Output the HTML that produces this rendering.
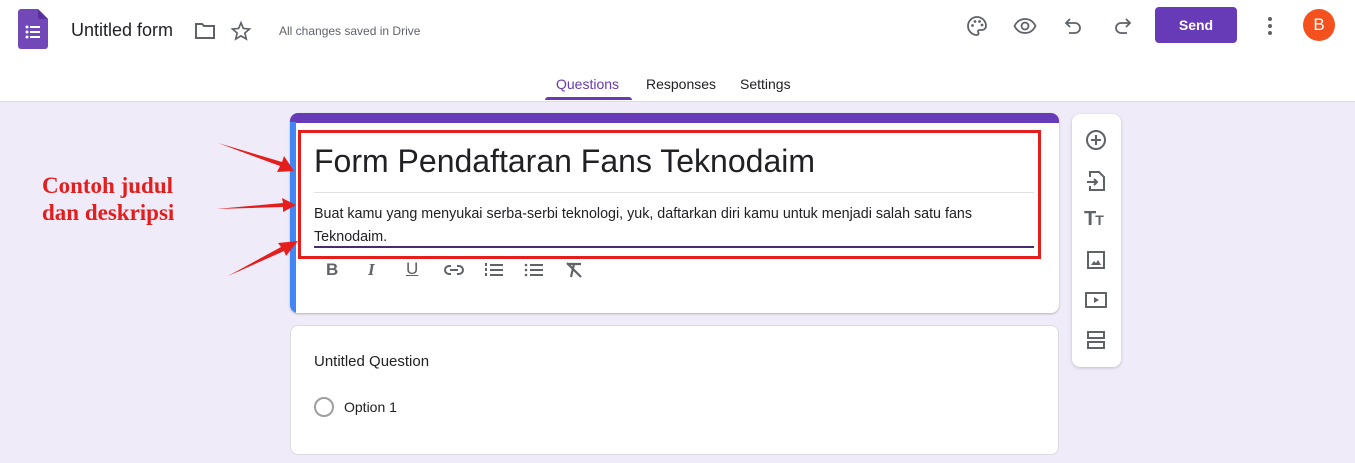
<!DOCTYPE html>
<html><head><meta charset="utf-8"><style>
*{margin:0;padding:0;box-sizing:border-box}
body{width:1355px;height:463px;overflow:hidden;background:#f0ebf8;font-family:"Liberation Sans",Arial,sans-serif;position:relative;color:#202124}
.hdr{position:absolute;left:0;top:0;width:1355px;height:102px;background:#fff;border-bottom:1px solid #dadce0}
.abs{position:absolute}
.tab{position:absolute;top:76px;font-size:14px;color:#202124}
.card{position:absolute;background:#fff;border-radius:8px;border:1px solid #dadce0}
</style></head><body>
<div class="hdr">
  <svg class="abs" style="left:18px;top:9px" width="30" height="40" viewBox="0 0 30 40"><path d="M3 0H20L30 10V37A3 3 0 0 1 27 40H3A3 3 0 0 1 0 37V3A3 3 0 0 1 3 0Z" fill="#7248b9"/><path d="M20 0L30 10H22A2 2 0 0 1 20 8Z" fill="#5a2fa0"/><g fill="#fff"><circle cx="9" cy="18" r="1.5"/><circle cx="9" cy="23" r="1.5"/><circle cx="9" cy="28" r="1.5"/><rect x="12" y="17" width="10" height="2"/><rect x="12" y="22" width="10" height="2"/><rect x="12" y="27" width="10" height="2"/></g></svg>
  <div class="abs" style="left:71px;top:20px;font-size:18px;color:#202124">Untitled form</div>
  <svg class="abs" style="left:194px;top:21px" width="22" height="20" viewBox="0 0 22 20"><path d="M2 3H8L10 5H20V17H2Z" fill="none" stroke="#5f6368" stroke-width="2"/></svg>
  <svg class="abs" style="left:230px;top:20px" width="22" height="22" viewBox="0 0 24 24"><path d="M12 3L14.6 9.2 21.3 9.8 16.2 14.2 17.8 20.8 12 17.3 6.2 20.8 7.8 14.2 2.7 9.8 9.4 9.2Z" fill="none" stroke="#5f6368" stroke-width="1.8"/></svg>
  <div class="abs" style="left:279px;top:24px;font-size:12px;color:#5f6368">All changes saved in Drive</div>
  <svg class="abs" style="left:965px;top:14px" width="24" height="24" viewBox="0 0 24 24"><path d="M12 3a9 9 0 0 0 0 18c1 0 1.6-.7 1.6-1.5 0-.9-.7-1.2-.7-2 0-.9.7-1.5 1.6-1.5H17a4 4 0 0 0 4-4c0-5-4-9-9-9z" fill="none" stroke="#5f6368" stroke-width="1.8"/><g fill="#5f6368"><circle cx="7.5" cy="11.5" r="1.4"/><circle cx="10" cy="7.5" r="1.4"/><circle cx="14.5" cy="7.5" r="1.4"/><circle cx="17" cy="11" r="1.4"/></g></svg>
  <svg class="abs" style="left:1013px;top:14px" width="24" height="24" viewBox="0 0 24 24"><path d="M1.5 12C4 7 8 5 12 5s8 2 10.5 7c-2.5 5-6.5 7-10.5 7S4 17 1.5 12z" fill="none" stroke="#5f6368" stroke-width="1.8"/><circle cx="12" cy="12" r="3.5" fill="none" stroke="#5f6368" stroke-width="1.8"/></svg>
  <svg class="abs" style="left:1062px;top:14px" width="24" height="24" viewBox="0 0 24 24"><path d="M8 5L4 9l4 4M4 9h9a5 5 0 0 1 0 10h-6" fill="none" stroke="#5f6368" stroke-width="1.8"/></svg>
  <svg class="abs" style="left:1110px;top:14px" width="24" height="24" viewBox="0 0 24 24"><path d="M16 5l4 4-4 4M20 9h-9a5 5 0 0 0 0 10h6" fill="none" stroke="#5f6368" stroke-width="1.8"/></svg>
  <div class="abs" style="left:1155px;top:7px;width:82px;height:36px;background:#673ab7;border-radius:4px;color:#fff;font-size:14px;font-weight:bold;text-align:center;line-height:36px">Send</div>
  <svg class="abs" style="left:1262px;top:14px" width="16" height="24" viewBox="0 0 16 24"><g fill="#5f6368"><circle cx="8" cy="5" r="2"/><circle cx="8" cy="12" r="2"/><circle cx="8" cy="19" r="2"/></g></svg>
  <div class="abs" style="left:1303px;top:9px;width:32px;height:32px;border-radius:50%;background:#f4511e;color:#fff;font-size:17px;text-align:center;line-height:32px">B</div>
  <div class="tab" style="left:556px;color:#673ab7">Questions</div>
  <div class="tab" style="left:646px">Responses</div>
  <div class="tab" style="left:740px">Settings</div>
  <div class="abs" style="left:545px;top:97px;width:87px;height:3px;background:#673ab7;border-radius:3px 3px 0 0"></div>
</div>

<div class="card" style="left:290px;top:113px;width:769px;height:200px;overflow:hidden;border:none;box-shadow:0 1px 2px rgba(0,0,0,.25)">
  <div class="abs" style="left:0;top:0;width:769px;height:10px;background:#673ab7"></div>
  <div class="abs" style="left:0;top:9px;width:6px;height:191px;background:#4285f4"></div>
</div>
<div class="abs" style="left:298px;top:130px;width:743px;height:129px;border:3px solid #e41d1d"></div>
<div class="abs" style="left:314px;top:143px;font-size:32px;color:#202124">Form Pendaftaran Fans Teknodaim</div>
<div class="abs" style="left:314px;top:192px;width:720px;height:1px;background:#e0e0e0"></div>
<div class="abs" style="left:314px;top:203px;width:690px;font-size:14.3px;line-height:23px;color:#202124">Buat kamu yang menyukai serba-serbi teknologi, yuk, daftarkan diri kamu untuk menjadi salah satu fans Teknodaim.</div>
<div class="abs" style="left:314px;top:246px;width:720px;height:2px;background:#4a2b6e"></div>
<div class="abs" style="left:326px;top:260px;font-size:17px;color:#5f6368;font-weight:bold">B</div>
<div class="abs" style="left:368px;top:260px;font-size:17px;color:#5f6368;font-weight:bold;font-style:italic;font-family:'Liberation Serif',serif">I</div>
<div class="abs" style="left:406px;top:259px;font-size:17px;color:#5f6368;text-decoration:underline">U</div>
<svg class="abs" style="left:443px;top:261px" width="22" height="18" viewBox="0 0 22 18"><path d="M8 5H6a4 4 0 0 0 0 8h2M14 5h2a4 4 0 0 1 0 8h-2M7 9h8" fill="none" stroke="#5f6368" stroke-width="2"/></svg>
<svg class="abs" style="left:483px;top:261px" width="22" height="18" viewBox="0 0 22 18"><g fill="#5f6368"><rect x="7" y="3" width="13" height="2"/><rect x="7" y="8" width="13" height="2"/><rect x="7" y="13" width="13" height="2"/><rect x="2" y="2" width="2" height="3"/><rect x="2" y="7" width="2" height="3"/><rect x="2" y="12" width="2" height="3"/></g></svg>
<svg class="abs" style="left:523px;top:261px" width="22" height="18" viewBox="0 0 22 18"><g fill="#5f6368"><rect x="7" y="3" width="13" height="2"/><rect x="7" y="8" width="13" height="2"/><rect x="7" y="13" width="13" height="2"/><circle cx="3" cy="4" r="1.3"/><circle cx="3" cy="9" r="1.3"/><circle cx="3" cy="14" r="1.3"/></g></svg>
<svg class="abs" style="left:563px;top:261px" width="22" height="18" viewBox="0 0 22 18"><path d="M4 3H18M11 3L8 16M4 2L18 16" fill="none" stroke="#5f6368" stroke-width="2.2"/></svg>

<div class="card" style="left:290px;top:325px;width:769px;height:130px">
  <div class="abs" style="left:23px;top:27px;font-size:15px">Untitled Question</div>
  <div class="abs" style="left:23px;top:71px;width:20px;height:20px;border:2px solid #9e9e9e;border-radius:50%"></div>
  <div class="abs" style="left:53px;top:73px;font-size:14px">Option 1</div>
</div>

<div class="card" style="left:1072px;top:114px;width:49px;height:253px;box-shadow:0 1px 3px rgba(0,0,0,.2);border:none">
  <svg class="abs" style="left:12px;top:14px" width="24" height="24" viewBox="0 0 24 24"><circle cx="12" cy="12" r="9" fill="none" stroke="#5f6368" stroke-width="2"/><path d="M12 7v10M7 12h10" stroke="#5f6368" stroke-width="2"/></svg>
  <svg class="abs" style="left:12px;top:55px" width="24" height="24" viewBox="0 0 24 24"><path d="M6 8V3h9l5 5v13H6v-4" fill="none" stroke="#5f6368" stroke-width="2"/><path d="M3 13h10M10 10l3 3-3 3" fill="none" stroke="#5f6368" stroke-width="2"/></svg>
  <div class="abs" style="left:12px;top:94px;font-size:20px;font-weight:bold;color:#5f6368;letter-spacing:-1px">T<span style="font-size:14px">T</span></div>
  <svg class="abs" style="left:12px;top:134px" width="24" height="24" viewBox="0 0 24 24"><rect x="4" y="4" width="16" height="16" fill="none" stroke="#5f6368" stroke-width="2"/><path d="M7 17l3-4 2 2 2-3 3 5z" fill="#5f6368"/></svg>
  <svg class="abs" style="left:12px;top:174px" width="24" height="24" viewBox="0 0 24 24"><rect x="2" y="5" width="20" height="14" fill="none" stroke="#5f6368" stroke-width="2"/><path d="M10 9v6l5-3z" fill="#5f6368"/></svg>
  <svg class="abs" style="left:12px;top:214px" width="24" height="24" viewBox="0 0 24 24"><rect x="4" y="4" width="16" height="6" fill="none" stroke="#5f6368" stroke-width="2"/><rect x="4" y="14" width="16" height="6" fill="none" stroke="#5f6368" stroke-width="2"/></svg>
</div>

<div class="abs" style="left:42px;top:172px;font-family:'Liberation Serif',serif;font-weight:bold;font-size:23px;line-height:27px;color:#e41d1d">Contoh judul<br>dan deskripsi</div>
<svg class="abs" style="left:0;top:0" width="310" height="300" viewBox="0 0 310 300">
<g fill="#e41d1d">
<polygon points="218,143 282,162 284,156 294,171 277,172 280,166"/>
<polygon points="216,209 283,203 282,198 296,205 283,212 283,207"/>
<polygon points="228,276 281,247 278,243 298,241 286,256 284,251"/>
</g></svg>
</body></html>
